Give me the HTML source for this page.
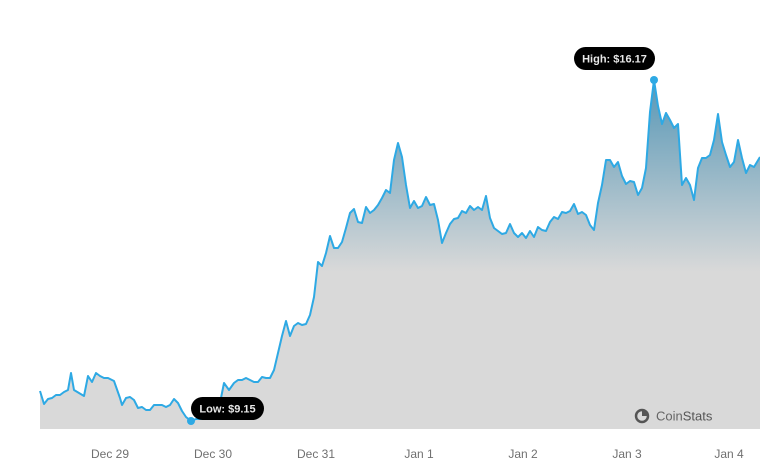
<!DOCTYPE html>
<html><head><meta charset="utf-8"><style>
html,body{margin:0;padding:0;background:#fff;width:760px;height:472px;overflow:hidden;font-family:"Liberation Sans",sans-serif}
</style></head><body>
<svg width="760" height="472" viewBox="0 0 760 472" xmlns="http://www.w3.org/2000/svg">
<defs>
<linearGradient id="g" gradientUnits="userSpaceOnUse" x1="0" y1="80" x2="0" y2="272">
<stop offset="0" stop-color="#5797b6"/>
<stop offset="1" stop-color="#d9d9d9"/>
</linearGradient>
</defs>
<path fill="url(#g)" d="M40,391 L44,404 L48,399 L52,398 L56,395 L60,395 L64,392 L68,390 L71,373 L74,390 L79,393 L84,396 L88,376 L92,382 L96,373 L100,376 L104,378 L108,378 L114,381 L120,398 L122,405 L126,398 L130,397 L134,400 L138,408 L142,407 L146,410 L150,410 L154,405 L158,405 L162,405 L166,407 L170,405 L174,399 L178,403 L182,411 L186,417 L191,421 L196,419 L219,419 L221,398 L224,383 L229,390 L234,383 L238,380 L242,380 L246,378 L250,380 L254,382 L258,382 L262,377 L266,378 L270,378 L274,370 L278,353 L282,336 L286,321 L290,336 L294,326 L298,323 L302,325 L306,324 L310,315 L314,297 L318,262 L322,266 L326,253 L330,236 L334,248 L338,248 L342,242 L346,228 L350,213 L354,209 L358,222 L362,223 L366,207 L370,213 L374,210 L378,205 L382,198 L386,190 L390,193 L394,160 L398,143 L402,157 L406,185 L410,208 L414,201 L418,208 L422,206 L426,197 L430,205 L434,204 L438,220 L442,243 L446,233 L450,224 L454,219 L458,218 L462,211 L466,213 L470,206 L474,210 L478,207 L482,210 L486,196 L490,218 L494,228 L498,231 L502,234 L506,233 L510,224 L514,233 L518,237 L522,233 L526,238 L530,231 L534,237 L538,227 L542,230 L546,231 L550,222 L554,217 L558,219 L562,212 L566,213 L570,211 L574,204 L578,214 L582,212 L586,215 L590,225 L594,230 L598,203 L602,185 L606,160 L610,160 L614,167 L618,162 L622,176 L626,184 L630,181 L634,182 L638,195 L642,188 L646,168 L650,112 L654,80 L658,106 L662,124 L666,113 L670,120 L674,128 L678,124 L682,185 L686,178 L690,185 L694,200 L698,168 L702,158 L706,158 L710,155 L714,140 L718,114 L722,142 L726,155 L730,167 L734,162 L738,140 L742,158 L746,173 L750,165 L754,167 L760,157 L760,429 L40,429 Z"/>
<polyline fill="none" stroke="#2ea9e4" stroke-width="2" stroke-linejoin="round" points="40,391 44,404 48,399 52,398 56,395 60,395 64,392 68,390 71,373 74,390 79,393 84,396 88,376 92,382 96,373 100,376 104,378 108,378 114,381 120,398 122,405 126,398 130,397 134,400 138,408 142,407 146,410 150,410 154,405 158,405 162,405 166,407 170,405 174,399 178,403 182,411 186,417 191,421 196,419 219,419 221,398 224,383 229,390 234,383 238,380 242,380 246,378 250,380 254,382 258,382 262,377 266,378 270,378 274,370 278,353 282,336 286,321 290,336 294,326 298,323 302,325 306,324 310,315 314,297 318,262 322,266 326,253 330,236 334,248 338,248 342,242 346,228 350,213 354,209 358,222 362,223 366,207 370,213 374,210 378,205 382,198 386,190 390,193 394,160 398,143 402,157 406,185 410,208 414,201 418,208 422,206 426,197 430,205 434,204 438,220 442,243 446,233 450,224 454,219 458,218 462,211 466,213 470,206 474,210 478,207 482,210 486,196 490,218 494,228 498,231 502,234 506,233 510,224 514,233 518,237 522,233 526,238 530,231 534,237 538,227 542,230 546,231 550,222 554,217 558,219 562,212 566,213 570,211 574,204 578,214 582,212 586,215 590,225 594,230 598,203 602,185 606,160 610,160 614,167 618,162 622,176 626,184 630,181 634,182 638,195 642,188 646,168 650,112 654,80 658,106 662,124 666,113 670,120 674,128 678,124 682,185 686,178 690,185 694,200 698,168 702,158 706,158 710,155 714,140 718,114 722,142 726,155 730,167 734,162 738,140 742,158 746,173 750,165 754,167 760,157"/>
<rect x="191" y="397" width="73" height="23" rx="11.5" fill="#000"/>
<circle cx="191" cy="421" r="4" fill="#2ea9e4"/>
<text x="227.5" y="412.5" text-anchor="middle" fill="#e8e8e8" font-size="11" font-weight="bold" font-family="Liberation Sans, sans-serif">Low: $9.15</text>
<circle cx="654" cy="80" r="4" fill="#2ea9e4"/>
<rect x="574" y="47" width="81" height="23" rx="11.5" fill="#000"/>
<text x="614.5" y="62.5" text-anchor="middle" fill="#e8e8e8" font-size="11" font-weight="bold" font-family="Liberation Sans, sans-serif">High: $16.17</text>
<g fill="#707070" font-size="12" font-family="Liberation Sans, sans-serif" text-anchor="middle">
<text x="110" y="458">Dec 29</text>
<text x="213" y="458">Dec 30</text>
<text x="316" y="458">Dec 31</text>
<text x="419" y="458">Jan 1</text>
<text x="523" y="458">Jan 2</text>
<text x="627" y="458">Jan 3</text>
<text x="729" y="458">Jan 4</text>
</g>
<circle cx="642" cy="416" r="6" fill="none" stroke="#555" stroke-width="2.5"/>
<path d="M642,416 L642,410 A6,6 0 0 1 648,416 Z" fill="#555"/>
<text x="656" y="420.5" fill="#666" font-size="13" font-family="Liberation Sans, sans-serif">Coin<tspan fill="#555">Stats</tspan></text>
</svg>
</body></html>
